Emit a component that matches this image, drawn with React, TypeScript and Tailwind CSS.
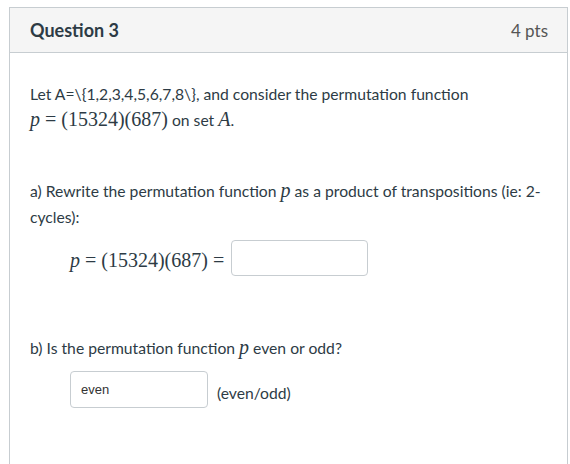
import React from "react";

const M = ({ children }: { children: React.ReactNode }) => (
  <span className="text-[20px] leading-none" style={{ fontFamily: '"Liberation Serif", "DejaVu Serif", serif' }}>{children}</span>
);
const I = ({ children }: { children: React.ReactNode }) => (
  <span className="italic">{children}</span>
);
const Eq = () => <span className="mx-[5px]">=</span>;

export default function App() {
  return (
    <div className="w-[570px] h-[464px] bg-white overflow-hidden pt-[7px] pl-[9px]" style={{ fontFamily: 'Lato, "Noto Sans", sans-serif' }}>
      <div className="w-[559px] h-[520px] border border-[#c7cdd1] text-[#2d3b45]">
        <div className="h-[45px] bg-[#f5f5f5] border-b border-[#c7cdd1] flex items-center justify-between pl-[20px] pr-[19px]">
          <span className="text-[18px] font-bold text-[#2d3b45] leading-none">Question 3</span>
          <span className="text-[17px] text-[#555] leading-none">4 pts</span>
        </div>
        <div className="pl-[20px] pr-[10px] pt-[28px] text-[15.7px] leading-[26px]">
          <div>Let A=\{"{"}1,2,3,4,5,6,7,8\{"}"}, and consider the permutation function</div>
          <div>
            <M><I>p</I><Eq />(15324)(687)</M> on set <M><I>A</I></M>.
          </div>
          <div className="mt-[45px]">
            a) Rewrite the permutation function <M><I>p</I></M> as a product of transpositions (ie: 2-
            <br />
            cycles):
          </div>
          <div className="mt-[10px] flex items-center pl-[40px]">
            <span className="mt-[6px]"><M><I>p</I><Eq />(15324)(687)<Eq /></M></span>
            <div className="ml-[2px] w-[137px] h-[36px] border border-[#c7cdd1] rounded-[4px] bg-white"></div>
          </div>
          <div className="mt-[59px]">
            b) Is the permutation function <M><I>p</I></M> even or odd?
          </div>
          <div className="mt-[10px] flex items-center pl-[40px]">
            <div className="w-[138px] h-[37px] border border-[#c7cdd1] rounded-[4px] bg-white flex items-center pl-[10px] text-[13px] text-[#333]" style={{ fontFamily: '"Liberation Sans", Arial, sans-serif' }}>
              even
            </div>
            <span className="ml-[9px] mt-[6px]">(even/odd)</span>
          </div>
        </div>
      </div>
    </div>
  );
}
